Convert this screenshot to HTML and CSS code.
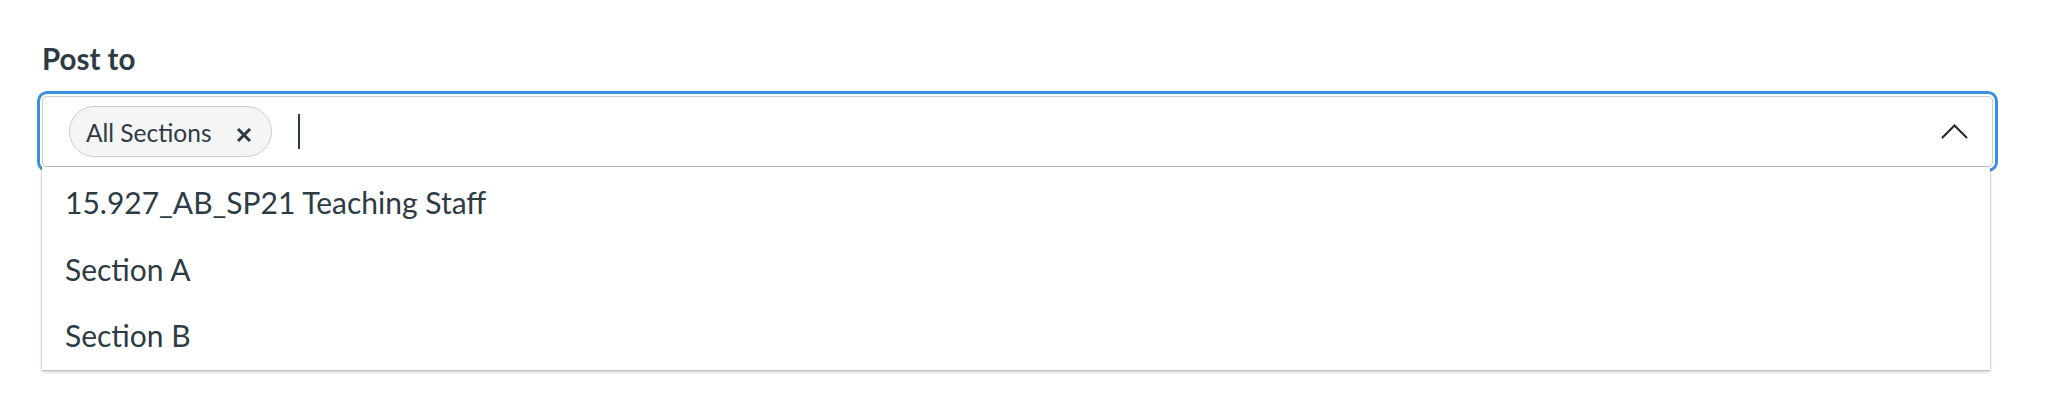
FILE: index.html
```html
<!DOCTYPE html>
<html lang="en">
<head>
<meta charset="utf-8">
<title>Post to</title>
<link rel="stylesheet" href="styles.css">
</head>
<body>
<div class="field">
  <label class="label" for="sections">Post to</label>
  <div class="select">
    <div class="input">
      <span class="tag">
        <span class="tag-text">All Sections</span>
        <svg class="tag-x" width="16" height="14" viewBox="0 0 16 14" aria-hidden="true">
          <path d="M2 1 L14 13 M14 1 L2 13" stroke="#2d3b45" stroke-width="3" fill="none"/>
        </svg>
      </span>
      <span class="caret" id="sections"></span>
      <svg class="chevron" width="27" height="15" viewBox="0 0 27 15" aria-hidden="true">
        <path d="M1 14 L13.5 1.5 L26 14" stroke="#1f262b" stroke-width="2" fill="none"/>
      </svg>
    </div>
    <ul class="menu">
      <li class="option">15.927_AB_SP21 Teaching Staff</li>
      <li class="option">Section A</li>
      <li class="option">Section B</li>
    </ul>
  </div>
</div>
</body>
</html>
```
FILE: styles.css
```css
html, body {
  margin: 0;
  background: #ffffff;
}

html {
  min-height: 100%;
}

body {
  min-height: 418px;
  font-family: Lato, "Noto Sans", sans-serif;
  color: #2d3b45;
}

.field {
  padding: 41px 55px 0 42px;
}

.label {
  display: block;
  font-weight: 700;
  font-size: 29.5px;
  line-height: 35px;
  margin-bottom: 20px;
}

.select {
  position: relative;
}

.input {
  box-sizing: border-box;
  height: 71px;
  border: 1px solid #c7cdd1;
  border-radius: 5px;
  background: #fff;
  box-shadow: 0 0 0 2px #ffffff, 0 0 0 5px #3b8fe0;
  display: flex;
  align-items: center;
  padding: 0 24px 0 26px;
}

.tag {
  box-sizing: border-box;
  height: 51px;
  display: inline-flex;
  align-items: center;
  padding: 0 19px 0 16px;
  border: 1px solid #c7cdd1;
  border-radius: 26px;
  background: #f5f5f5;
  font-size: 24.5px;
}

.tag-text {
  line-height: 30px;
  position: relative;
  top: 1px;
}

.tag-x {
  margin-left: 24px;
  position: relative;
  top: 3px;
}

.caret {
  display: block;
  width: 2px;
  height: 35px;
  margin-left: 26px;
  background: #2d3b45;
}

.chevron {
  margin-left: auto;
}

.menu {
  position: absolute;
  top: 100%;
  left: 0;
  right: 3px;
  margin: 0;
  padding: 2px 0 1px;
  list-style: none;
  background: #ffffff;
  box-shadow: 0 0 1px rgba(0, 0, 0, 0.45), 0 2px 3px rgba(0, 0, 0, 0.22);
}

.option {
  height: 66.67px;
  line-height: 66.67px;
  padding: 0 23px;
  font-size: 30px;
  white-space: nowrap;
}
```
